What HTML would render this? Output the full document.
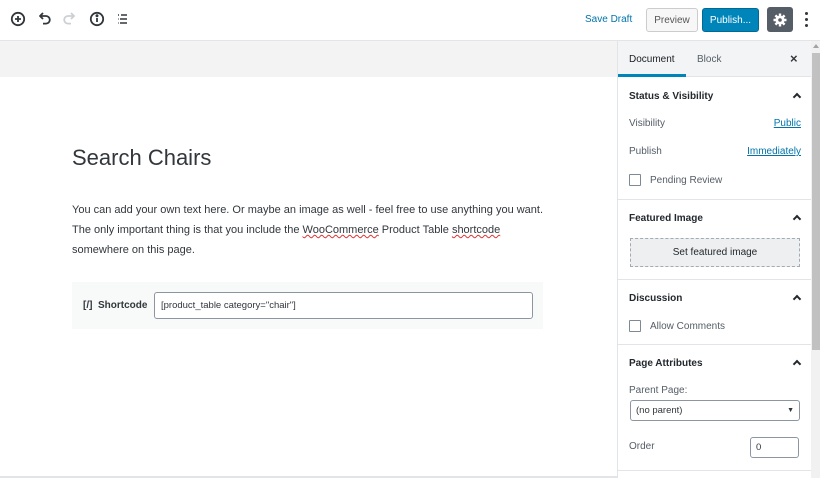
<!DOCTYPE html>
<html><head><meta charset="utf-8"><style>
*{box-sizing:border-box;margin:0;padding:0}
body{width:820px;height:478px;overflow:hidden;background:#fff;font-family:"Liberation Sans",sans-serif;color:#32373c;position:relative;font-size:10px}
.abs{position:absolute}
.top{left:0;top:0;width:820px;height:41px;border-bottom:1px solid #e2e4e7;background:#fff}
.gray{left:0;top:41px;width:617px;height:36px;background:#f3f3f3}
.side{left:617px;top:41px;width:194px;height:437px;border-left:1px solid #e2e4e7;background:#fff}
.scroll{left:811px;top:41px;width:9px;height:437px;background:#f1f1f1}
.thumb{left:812px;top:53px;width:8px;height:297px;background:#c1c1c1}
.sec{position:absolute;left:0;width:194px;border-top:1px solid #e2e4e7}
.h{position:absolute;left:11px;font-size:10px;font-weight:bold;color:#23282d}
.car{position:absolute;right:12px;width:6px;height:6px;border-left:2px solid #23282d;border-top:2px solid #23282d;transform:rotate(45deg)}
.lab{position:absolute;left:11px;font-size:10px;color:#555d66}
.lnk{position:absolute;right:11px;font-size:10px;color:#0073aa;text-decoration:underline}
.cb{position:absolute;left:11px;width:12px;height:12px;border:1px solid #7e8993;border-radius:1px}
p{font-size:11px;line-height:20px;color:#32373c}
.sq{text-decoration:underline wavy #d33;text-decoration-thickness:1px}
</style></head><body>
<div class="abs top"></div>
<svg class="abs" style="left:9px;top:9px" width="130" height="20" viewBox="0 0 130 20" fill="none" stroke="#32373c" stroke-width="1.8">
<circle cx="9" cy="10" r="6.2"/><path d="M9 7v6M6 10h6"/>
<path d="M31 7h6a3.8 3.8 0 0 1 0 7.6h-3"/><path d="M34 4l-3 3 3 3" stroke-linejoin="round"/>
<g stroke="#ccd0d4"><path d="M65 7h-6a3.8 3.8 0 0 0 0 7.6h3"/><path d="M62 4l3 3-3 3"/></g>
<circle cx="88" cy="10" r="6.2"/><path d="M88 9v4"/><circle cx="88" cy="6.8" r="0.6" fill="#32373c"/>
<path d="M109 6h1M112 6h6M111 10h7M111 14h7M109 10h0.6M109 14h0.6" stroke-width="1.5"/>
</svg>
<div class="abs" style="left:585px;top:14px;font-size:10px;color:#0073aa">Save Draft</div>
<div class="abs" style="left:646px;top:8px;width:52px;height:24px;border:1px solid #ccc;background:#f7f7f7;border-radius:3px;font-size:10px;color:#555;text-align:center;line-height:24px">Preview</div>
<div class="abs" style="left:702px;top:8px;width:57px;height:24px;background:#0085ba;border:1px solid #006a95;border-radius:3px;font-size:10px;color:#fff;text-align:center;line-height:24px">Publish...</div>
<div class="abs" style="left:767px;top:7px;width:26px;height:25px;background:#555d66;border-radius:3px"></div>
<svg class="abs" style="left:772px;top:12px" width="16" height="16" viewBox="0 0 16 16"><g fill="#fff"><circle cx="8" cy="8" r="4.5"/><g stroke="#fff" stroke-width="2.4"><path d="M8 1.5v13M1.5 8h13M3.4 3.4l9.2 9.2M12.6 3.4l-9.2 9.2"/></g></g><circle cx="8" cy="8" r="1.8" fill="#555d66"/></svg>
<div class="abs" style="left:805px;top:12px;width:3px;height:3px;background:#32373c;border-radius:50%;box-shadow:0 6px 0 #32373c,0 12px 0 #32373c"></div>

<div class="abs gray"></div>
<div class="abs" style="left:72px;top:145px;font-size:22px;color:#32373c">Search Chairs</div>
<div class="abs" style="left:72px;top:200px;width:480px">
<p>You can add your own text here. Or maybe an image as well - feel free to use anything you want.</p>
<p>The only important thing is that you include the <span class="sq">WooCommerce</span> Product Table <span class="sq">shortcode</span></p>
<p>somewhere on this page.</p></div>
<div class="abs" style="left:72px;top:282px;width:471px;height:47px;background:#f8f9f9"></div>
<div class="abs" style="left:83px;top:300px;font-size:10px;font-weight:bold;color:#32373c">[/]&nbsp; Shortcode</div>
<div class="abs" style="left:154px;top:292px;width:379px;height:27px;border:1px solid #8d96a0;border-radius:3px;background:#fff;font-size:9.5px;line-height:25px;padding-left:6px;color:#32373c">[product_table category="chair"]</div>
<div class="abs" style="left:0;top:476px;width:617px;height:2px;background:#e2e4e7"></div>

<div class="abs side">
 <div class="abs" style="left:0;top:0;width:194px;height:36px;background:#f3f4f5;border-bottom:1px solid #e2e4e7"></div>
 <div class="abs" style="left:11px;top:13px;font-size:10px;color:#191e23">Document</div>
 <div class="abs" style="left:0;top:33px;width:68px;height:3px;background:#0085ba"></div>
 <div class="abs" style="left:79px;top:13px;font-size:10px;color:#555d66">Block</div>
 <div class="abs" style="left:172px;top:10px;font-size:13px;color:#32373c;font-weight:bold">×</div>

 <div class="sec" style="top:36px;height:122px;border-top:none">
  <div class="h" style="top:14px">Status &amp; Visibility</div><div class="car" style="top:17px"></div>
  <div class="lab" style="top:41px">Visibility</div><div class="lnk" style="top:41px">Public</div>
  <div class="lab" style="top:69px">Publish</div><div class="lnk" style="top:69px">Immediately</div>
  <div class="cb" style="top:97px"></div><div class="lab" style="left:32px;top:98px">Pending Review</div>
 </div>
 <div class="sec" style="top:158px;height:80px">
  <div class="h" style="top:13px">Featured Image</div><div class="car" style="top:16px"></div>
  <div class="abs" style="left:12px;top:38px;width:170px;height:29px;border:1px dashed #a2aab2;background:#edeff0;font-size:10px;text-align:center;line-height:27px;color:#23282d">Set featured image</div>
 </div>
 <div class="sec" style="top:238px;height:65px">
  <div class="h" style="top:13px">Discussion</div><div class="car" style="top:16px"></div>
  <div class="cb" style="top:40px"></div><div class="lab" style="left:32px;top:41px">Allow Comments</div>
 </div>
 <div class="sec" style="top:303px;height:126px">
  <div class="h" style="top:13px">Page Attributes</div><div class="car" style="top:16px"></div>
  <div class="lab" style="top:40px">Parent Page:</div>
  <div class="abs" style="left:12px;top:55px;width:170px;height:21px;border:1px solid #8d96a0;border-radius:3px;font-size:9.5px;line-height:19px;padding-left:5px;color:#32373c">(no parent)<span style="position:absolute;right:5px;font-size:7px">▼</span></div>
  <div class="lab" style="top:96px">Order</div>
  <div class="abs" style="left:132px;top:92px;width:49px;height:21px;border:1px solid #8d96a0;border-radius:3px;font-size:9.5px;line-height:19px;padding-left:5px">0</div>
 </div>
 <div class="sec" style="top:429px;height:10px"></div>
</div>
<div class="abs scroll"></div>
<div class="abs thumb"></div>
<div class="abs" style="left:813px;top:44px;width:0;height:0;border-left:3px solid transparent;border-right:3px solid transparent;border-bottom:4px solid #a3a3a3"></div>
</body></html>
